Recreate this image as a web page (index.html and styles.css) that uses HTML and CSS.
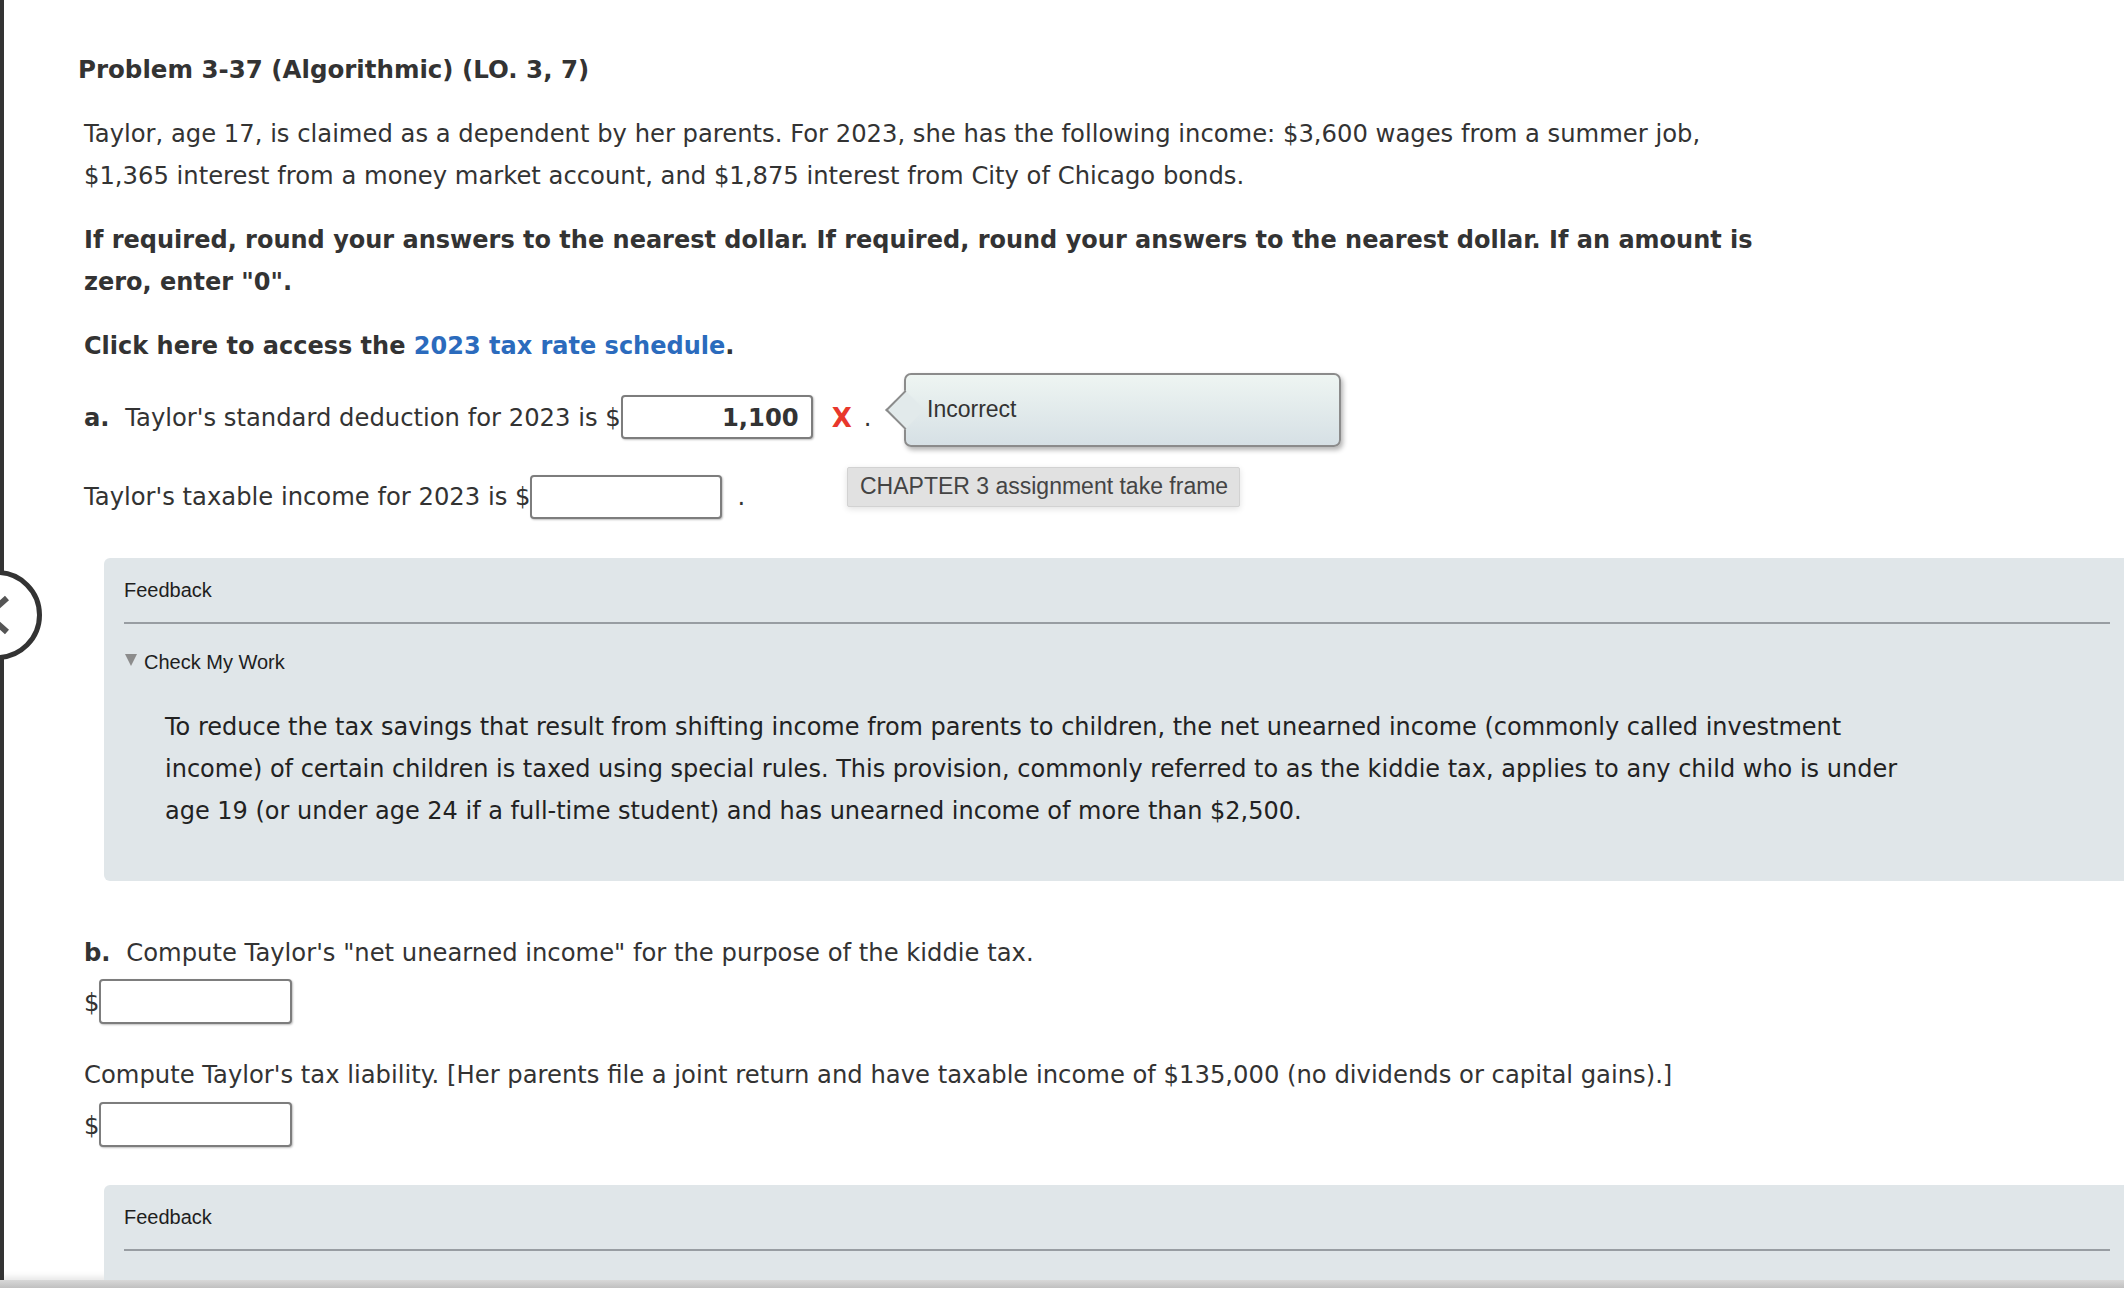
FILE: index.html
```html
<!DOCTYPE html>
<html lang="en">
<head>
    <meta charset="UTF-8">
    <meta name="viewport" content="width=device-width, initial-scale=1.0">
    <title>Problem 3-37</title>
    <link rel="stylesheet" href="styles.css">
</head>
<body>
    <div class="frame">
        <div class="problem">
            <h1 class="title">Problem 3-37 (Algorithmic) (LO. 3, 7)</h1>
            <p class="intro">Taylor, age 17, is claimed as a dependent by her parents. For 2023, she has the following income: $3,600 wages from a summer job, $1,365 interest from a money market account, and $1,875 interest from City of Chicago bonds.</p>
            <p class="note">If required, round your answers to the nearest dollar. If required, round your answers to the nearest dollar. If an amount is zero, enter "0".</p>
            <p class="access">Click here to access the <a href="#">2023 tax rate schedule</a>.</p>

            <div class="row row-a"><b class="part">a.</b> Taylor's standard deduction for 2023 is $<span class="answer filled">1,100</span><span class="wrong">X</span><span class="dot">.</span></div>
            <div class="row row-taxable">Taylor's taxable income for 2023 is $<span class="answer"></span><span class="dot">.</span></div>

            <div class="feedback">
                <div class="fb-label">Feedback</div>
                <div class="fb-rule"></div>
                <div class="fb-toggle">Check My Work</div>
                <p class="fb-text">To reduce the tax savings that result from shifting income from parents to children, the net unearned income (commonly called investment income) of certain children is taxed using special rules. This provision, commonly referred to as the kiddie tax, applies to any child who is under age 19 (or under age 24 if a full-time student) and has unearned income of more than $2,500.</p>
            </div>

            <p class="part-b"><b class="part">b.</b> Compute Taylor's "net unearned income" for the purpose of the kiddie tax.</p>
            <div class="row dollar-row first">$<span class="answer tall"></span></div>
            <p class="compute">Compute Taylor's tax liability. [Her parents file a joint return and have taxable income of $135,000 (no dividends or capital gains).]</p>
            <div class="row dollar-row second">$<span class="answer tall"></span></div>

            <div class="feedback last">
                <div class="fb-label">Feedback</div>
                <div class="fb-rule"></div>
                <div class="fb-toggle">Check My Work</div>
            </div>
        </div>

        <div class="tip-incorrect">Incorrect</div>
        <div class="tip-title">CHAPTER 3 assignment take frame</div>
    </div>
    <div class="scroll-edge"></div>

    <div class="nav-prev">
        <svg width="80" height="80" viewBox="0 0 80 80">
            <polyline points="50,23 31,40 50,57" fill="none" stroke="#555" stroke-width="6"/>
        </svg>
    </div>
</body>
</html>
```

FILE: styles.css
```css
body {
    margin: 0;
    font-family: "DejaVu Sans", Verdana, sans-serif;
    color: #333;
    background: #fff;
    position: relative;
}
.frame {
    position: relative;
    height: 1280px;
    overflow: hidden;
    border-left: 4px solid #333;
}
.problem {
    padding: 55px 0 0 80px;
}
.title {
    margin: 0 0 0 -6px;
    font-size: 24.5px;
    line-height: 30px;
    font-weight: bold;
}
p {
    margin: 0;
    font-size: 24.25px;
    line-height: 42px;
}
.intro {
    margin-top: 28px;
    max-width: 1670px;
}
.note {
    margin-top: 22px;
    font-weight: bold;
    font-size: 24px;
    max-width: 1720px;
}
.access {
    margin-top: 22px;
    font-weight: bold;
    font-size: 24px;
}
.access a {
    color: #2b6bbd;
    text-decoration: none;
}
.row {
    font-size: 24.25px;
    line-height: 42px;
}
.part {
    margin-right: 8px;
}
.row-a { margin-top: 28px; }
.row-taxable { margin-top: 36px; }

.answer {
    display: inline-block;
    box-sizing: border-box;
    width: 192px;
    height: 44px;
    border: 2px solid #7d7d7d;
    border-radius: 4px;
    background: #fff;
    box-shadow: 1px 1px 2px rgba(0, 0, 0, 0.25);
    vertical-align: -14px;
}
.answer.filled {
    vertical-align: baseline;
    text-align: right;
    font-weight: bold;
    padding: 8px 12px 0 0;
    line-height: 26px;
}
.answer.tall {
    width: 193px;
    height: 45px;
    vertical-align: -13px;
}
.wrong {
    color: #e8372c;
    font-weight: bold;
    font-size: 26px;
    line-height: 1;
    margin-left: 19px;
    vertical-align: -1px;
}
.row-a .dot { margin-left: 12px; }
.row-taxable .dot { margin-left: 15px; }

.feedback {
    margin: 39px -10px 0 20px;
    padding: 21px 24px 49px 20px;
    background: #e0e6e9;
    border-radius: 6px;
}
.feedback.last {
    margin-top: 38px;
}
.fb-label,
.fb-toggle {
    font-family: "Liberation Sans", Arial, sans-serif;
    font-size: 20px;
    line-height: 22px;
    color: #1e1e1e;
}
.fb-rule {
    height: 2px;
    margin-top: 21px;
    background: #989da2;
}
.fb-toggle {
    margin-top: 27px;
}
.fb-toggle::before {
    content: "";
    display: inline-block;
    margin: 0 7px 0 1px;
    border-left: 6.5px solid transparent;
    border-right: 6.5px solid transparent;
    border-top: 12px solid #8c8c8c;
    vertical-align: 3px;
}
.fb-text {
    margin: 33px 0 0 41px;
    max-width: 1765px;
    font-size: 24px;
    color: #222;
}
.part-b { margin-top: 51px; }
.dollar-row.first { margin-top: 5px; }
.compute { margin-top: 30px; }
.dollar-row.second { margin-top: 6px; }

.tip-incorrect {
    position: absolute;
    left: 900px;
    top: 373px;
    width: 437px;
    height: 74px;
    box-sizing: border-box;
    padding: 21px 0 0 21px;
    border: 2px solid #8b8b8b;
    border-radius: 7px;
    background: linear-gradient(#eef5f2, #d6e0e5);
    box-shadow: 2px 3px 5px rgba(0, 0, 0, 0.3);
    font-family: "Liberation Sans", Arial, sans-serif;
    font-size: 23px;
    line-height: 26px;
    color: #333;
}
.tip-incorrect::before {
    content: "";
    position: absolute;
    left: -15px;
    top: 21px;
    width: 26px;
    height: 26px;
    background: #e2eaeb;
    border-left: 2px solid #8b8b8b;
    border-bottom: 2px solid #8b8b8b;
    transform: rotate(45deg);
}
.tip-title {
    position: absolute;
    left: 843px;
    top: 467px;
    width: 393px;
    height: 40px;
    box-sizing: border-box;
    padding: 6px 0 0 12px;
    background: #e1e1e1;
    border: 1px solid #d2d2d2;
    border-radius: 2px;
    box-shadow: 0 2px 6px rgba(0, 0, 0, 0.12);
    font-family: "Liberation Sans", Arial, sans-serif;
    font-size: 23px;
    line-height: 24px;
    color: #444;
}
.scroll-edge {
    height: 8px;
    background: linear-gradient(#d8d8d8, #c0c0c0);
    box-shadow: 0 -3px 6px rgba(0, 0, 0, 0.1);
}
.nav-prev {
    position: absolute;
    left: -48px;
    top: 570px;
    width: 90px;
    height: 90px;
    box-sizing: border-box;
    border: 5px solid #333;
    border-radius: 50%;
    background: #fff;
}
.nav-prev svg {
    display: block;
}
```
